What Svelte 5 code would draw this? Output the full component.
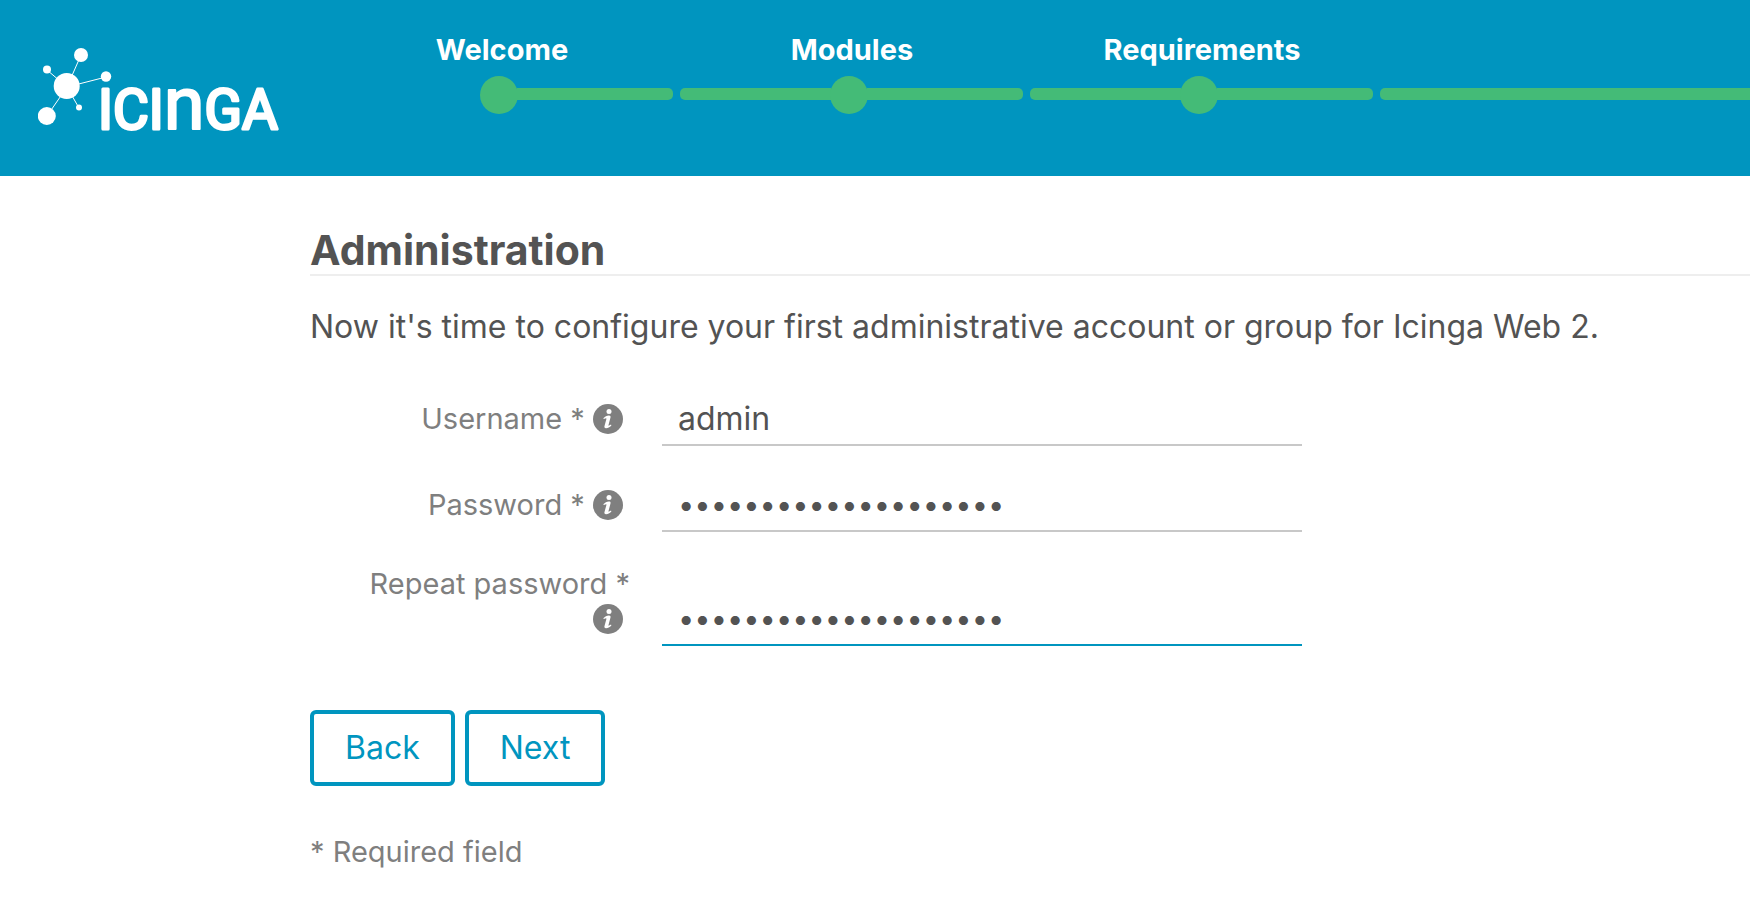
<script lang="ts">
	type Field = { id: string; label: string; type: 'text' | 'password'; value: string; active?: boolean };

	const steps = ['Welcome', 'Modules', 'Requirements'];

	let fields: Field[] = $state([
		{ id: 'username', label: 'Username', type: 'text', value: 'admin' },
		{ id: 'password', label: 'Password', type: 'password', value: 'correcthorsebattery1' },
		{ id: 'password-repeat', label: 'Repeat password', type: 'password', value: 'correcthorsebattery1', active: true },
	]);
</script>

<header>
	<a class="logo" href="#top" aria-label="Icinga">
		<svg viewBox="0 0 249 110" width="249" height="110">
			<g stroke="#fff" stroke-width="1">
				<path d="M29 41 9 70M29 41 43 9M29 41 9 24M29 41l39-10M29 41l12 21" />
			</g>
			<g fill="#fff">
				<circle cx="28.700" cy="40" r="13" />
				<circle cx="8.800" cy="70" r="9" />
				<circle cx="43" cy="9" r="7" />
				<circle cx="9" cy="23.500" r="4" />
				<circle cx="68" cy="30.500" r="5.200" />
				<circle cx="41" cy="61.500" r="3" />
			</g>
			<text class="wordmark" x="60" y="83">ICI<tspan class="arch">n</tspan>GA</text>
		</svg>
	</a>
	<ol class="steps">
		{#each steps as step, i}
			<li class="step">
				<span class="name">{step}</span>
				<span class="track">
					<span class="bar" class:hidden={i === 0}></span>
					<span class="dot"></span>
					<span class="bar end"></span>
				</span>
			</li>
		{/each}
		<li class="step rest">
			<span class="name"></span>
			<span class="track"><span class="bar"></span></span>
		</li>
	</ol>
</header>

<main>
	<h1>Administration</h1>
	<p class="intro">Now it's time to configure your first administrative account or group for Icinga Web 2.</p>

	<form onsubmit={(e) => e.preventDefault()}>
		{#each fields as field (field.id)}
			<div class="row">
				<label for={field.id}>
					{field.label} *
					<svg class="info" viewBox="0 0 30 30" width="30" height="30" aria-hidden="true">
						<circle cx="15" cy="15" r="15" fill="#7f7f7f" />
						<circle cx="16" cy="7.500" r="2.500" fill="#fff" />
						<path
							fill="#fff"
							d="M10.300 14.200c1.600-1.500 3.500-2.500 5.500-2.700 1.500-.1 2 .7 1.700 2l-2 7.500c-.2.9.2 1 2.500-.4l.4.8c-1.800 1.700-3.500 2.700-5.200 2.800-1.600.1-2.100-.8-1.700-2.200l1.900-7c.2-.9-.5-.9-2.500.1z"
						/>
					</svg>
				</label>
				<input id={field.id} type={field.type} bind:value={field.value} class:active={field.active} />
			</div>
		{/each}
		<div class="buttons">
			<button type="button">Back</button>
			<button type="submit">Next</button>
		</div>
	</form>

	<p class="note">* Required field</p>
</main>

<style>
	:global(body) {
		background: #fff;
		color: #535353;
		font-family: Inter, 'Open Sans', sans-serif;
		font-size: 32px;
		line-height: 40px;
		overflow-x: hidden;
	}

	header {
		display: flex;
		min-height: 176px;
		background: #0095bf;
		color: #fff;
	}
	.logo {
		flex: 0 0 287px;
		padding: 46px 0 0 38px;
	}
	.logo svg {
		display: block;
	}
	.wordmark {
		fill: #fff;
		stroke: #fff;
		stroke-width: 3;
		stroke-linejoin: round;
		font-family: Roboto, sans-serif;
		font-size: 55px;
	}
	.arch {
		font-size: 74px;
		stroke-width: 2;
	}

	.steps {
		display: flex;
		flex: 1;
		min-width: 0;
		margin: 0;
		padding: 32px 0 0;
		list-style: none;
	}
	.step {
		flex: 0 0 350px;
	}
	.rest {
		flex: 1;
	}
	.name {
		display: block;
		height: 36px;
		margin-bottom: 8px;
		padding-left: 4px;
		font-size: 29px;
		font-weight: 700;
		line-height: 36px;
		text-align: center;
	}
	.track {
		display: flex;
		align-items: center;
		height: 38px;
		padding: 0 2px 0 5px;
	}
	.rest .track {
		padding-right: 0;
	}
	.bar {
		flex: 0 0 151px;
		height: 12px;
		margin-bottom: 2px;
		border-radius: 5px 0 0 5px;
		background: #44bb77;
	}
	.bar.end {
		flex: 1;
		border-radius: 0 5px 5px 0;
	}
	.bar.hidden {
		visibility: hidden;
	}
	.rest .bar {
		flex: 1;
	}
	.dot {
		width: 38px;
		height: 38px;
		margin: 0 -1px;
		border-radius: 50%;
		background: #44bb77;
	}

	main {
		padding: 51px 0 24px 310px;
	}
	h1 {
		margin: 0;
		border-bottom: 2px solid #eee;
		font-size: 41px;
		font-weight: 700;
		line-height: 47px;
	}
	.intro {
		margin: 31px 0 43px;
	}

	.row {
		display: flex;
		align-items: flex-end;
		gap: 32px;
		margin-bottom: 30px;
	}
	label {
		box-sizing: border-box;
		width: 320px;
		padding: 4px 0 10px 24px;
		color: #7f7f7f;
		font-size: 29px;
		line-height: 35px;
		text-align: right;
	}
	.info {
		margin-right: 7px;
		vertical-align: -5px;
	}
	input {
		box-sizing: border-box;
		width: 640px;
		height: 56px;
		padding: 2px 16px 0;
		border: 0;
		border-bottom: 2px solid #c8c8c8;
		outline: none;
		background: none;
		color: #535353;
		font: inherit;
	}
	input[type='password'] {
		font-size: 29px;
	}
	input.active {
		border-color: #0095bf;
	}

	.buttons {
		display: flex;
		gap: 10px;
		margin-top: 64px;
	}
	button {
		height: 76px;
		padding: 0 31px;
		border: 4px solid #0095bf;
		border-radius: 6px;
		background: #fff;
		color: #0095bf;
		font: inherit;
		cursor: pointer;
	}
	.note {
		margin: 46px 0 0;
		color: #7f7f7f;
		font-size: 29px;
	}
</style>
